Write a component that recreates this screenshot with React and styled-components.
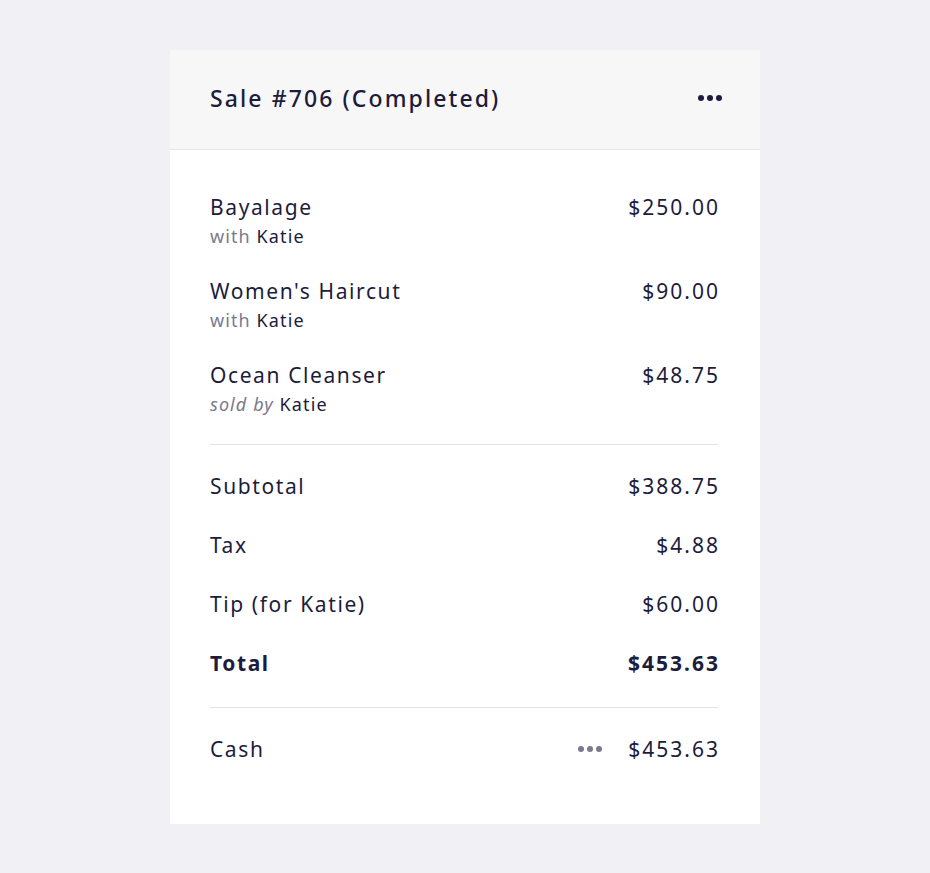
import styled, { createGlobalStyle } from "styled-components";

const GlobalStyle = createGlobalStyle`
  html, body {
    margin: 0;
    padding: 0;
    background: #f1f1f5;
  }
  body {
    font-family: "Noto Sans", "Open Sans", sans-serif;
    color: #1c1c3c;
  }
`;

const Page = styled.div`
  min-height: 873px;
  padding: 50px 0 0 170px;
  box-sizing: border-box;
`;

const Card = styled.div`
  width: 590px;
  background: #ffffff;
`;

const Header = styled.div`
  height: 100px;
  display: flex;
  align-items: center;
  justify-content: space-between;
  padding: 0 38px 4px 40px;
  background: #f7f7f8;
  border-bottom: 1px solid #e4e4e8;
  box-sizing: border-box;
`;

const Title = styled.h1`
  margin: 0;
  font-size: 23px;
  font-weight: 500;
  letter-spacing: 2.1px;
  color: #1c1c3c;
`;

const Dots = styled.button`
  border: 0;
  background: none;
  padding: 0;
  display: flex;
  gap: 3px;
  cursor: pointer;
  span {
    width: 6px;
    height: 6px;
    border-radius: 50%;
    background: ${(p) => p.$color || "#1c1c3c"};
  }
`;

const Body = styled.div`
  padding: 43px 42px 61px 40px;
`;

const Items = styled.div`
  display: flex;
  flex-direction: column;
  gap: 26px;
  padding-bottom: 25px;
  border-bottom: 1px solid #e4e4e8;
`;

const Row = styled.div`
  display: flex;
  justify-content: space-between;
  align-items: flex-start;
  font-size: 21px;
  line-height: 28px;
  letter-spacing: 1.6px;
  font-weight: ${(p) => (p.$bold ? 700 : 400)};
`;

const Value = styled.div`
  letter-spacing: 2px;
  margin-right: -2px;
`;

const Sub = styled.div`
  font-size: 18px;
  line-height: 30px;
  letter-spacing: 1.1px;
  color: #1c1c3c;
  em {
    font-style: ${(p) => (p.$italic ? "italic" : "normal")};
    color: #7a7a8e;
  }
`;

const Totals = styled.div`
  display: flex;
  flex-direction: column;
  gap: 31px;
  padding: 27px 0 30px;
  border-bottom: 1px solid #e4e4e8;
`;

const Payment = styled.div`
  padding-top: 27px;
`;

const Amount = styled.div`
  display: flex;
  align-items: center;
  gap: 26px;
`;

const items = [
  { name: "Bayalage", by: "with", price: "$250.00" },
  { name: "Women's Haircut", by: "with", price: "$90.00" },
  { name: "Ocean Cleanser", by: "sold by", price: "$48.75", italic: true },
];

const totals = [
  { label: "Subtotal", value: "$388.75" },
  { label: "Tax", value: "$4.88" },
  { label: "Tip (for Katie)", value: "$60.00" },
  { label: "Total", value: "$453.63", bold: true },
];

export default function App() {
  return (
    <>
      <GlobalStyle />
      <Page>
        <Card>
          <Header>
            <Title>Sale #706 (Completed)</Title>
            <Dots aria-label="More">
              <span />
              <span />
              <span />
            </Dots>
          </Header>
          <Body>
            <Items>
              {items.map((it) => (
                <Row key={it.name}>
                  <div>
                    <div>{it.name}</div>
                    <Sub $italic={it.italic}>
                      <em>{it.by}</em> Katie
                    </Sub>
                  </div>
                  <Value>{it.price}</Value>
                </Row>
              ))}
            </Items>
            <Totals>
              {totals.map((t) => (
                <Row key={t.label} $bold={t.bold}>
                  <div>{t.label}</div>
                  <Value>{t.value}</Value>
                </Row>
              ))}
            </Totals>
            <Payment>
              <Row>
                <div>Cash</div>
                <Amount>
                  <Dots $color="#7a7a8e" aria-label="Payment options">
                    <span />
                    <span />
                    <span />
                  </Dots>
                  <Value>$453.63</Value>
                </Amount>
              </Row>
            </Payment>
          </Body>
        </Card>
      </Page>
    </>
  );
}
